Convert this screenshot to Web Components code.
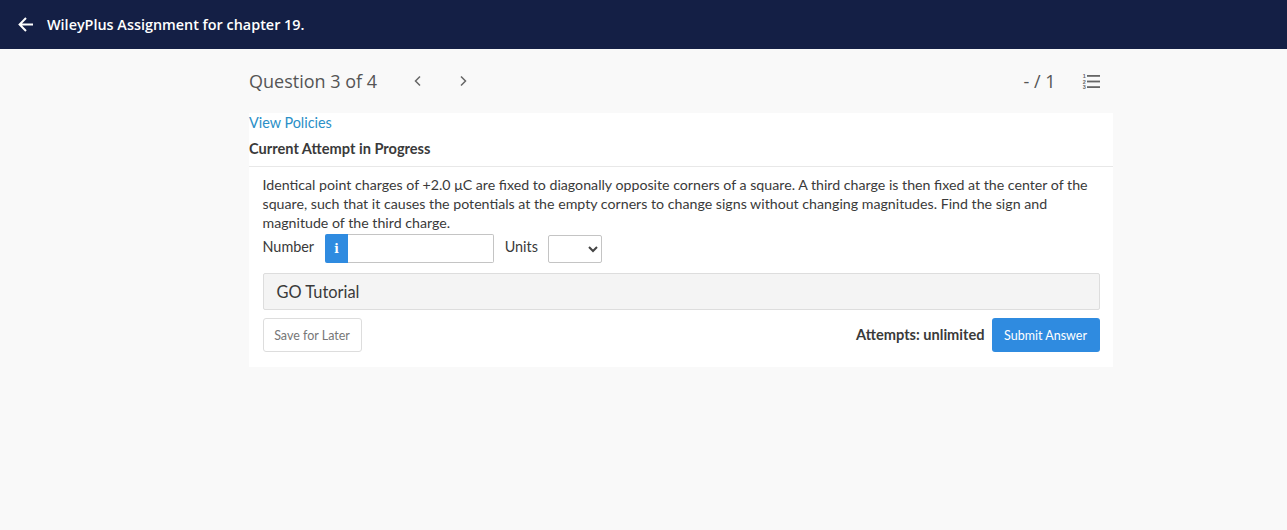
<!DOCTYPE html>
<html>
<head>
<meta charset="utf-8">
<title>WileyPlus Assignment</title>
<style>
  html, body { margin: 0; height: 100%; background: #f9f9f9; }
</style>
</head>
<body>

<app-header>WileyPlus Assignment for chapter 19.</app-header>

<question-page>
  <question-toolbar slot="toolbar" label="Question 3 of 4" score="- / 1"></question-toolbar>
  <question-card>
    Identical point charges of +2.0 μC are fixed to diagonally opposite corners of a square. A third charge is then fixed at the center of the square, such that it causes the potentials at the empty corners to change signs without changing magnitudes. Find the sign and magnitude of the third charge.
  </question-card>
</question-page>

<script>

class AppHeader extends HTMLElement {

  constructor () {

    super();

    this.attachShadow( { mode: 'open' } ).innerHTML = `
      <style>
        :host {
          display: flex;
          align-items: center;
          height: 49px;
          padding-left: 18px;
          background: #141f45;
          color: #fff;
          font: 600 14.4px "Open Sans", sans-serif;
        }
        svg { margin-right: 14px; flex: none; }
      </style>
      <svg width="15" height="15" viewBox="0 0 15 15" fill="none" stroke="#fff" stroke-width="2">
        <path d="M15 7.5H2M8 1 1.6 7.5 8 14"/>
      </svg>
      <slot></slot>
    `;

  }

}

class QuestionPage extends HTMLElement {

  constructor () {

    super();

    this.attachShadow( { mode: 'open' } ).innerHTML = `
      <style>
        :host {
          display: block;
          width: 864px;
          margin-left: 249px;
        }
      </style>
      <slot name="toolbar"></slot>
      <slot></slot>
    `;

  }

}

class QuestionToolbar extends HTMLElement {

  connectedCallback () {

    this.attachShadow( { mode: 'open' } ).innerHTML = `
      <style>
        :host {
          display: flex;
          align-items: center;
          height: 64px;
          padding-right: 13px;
          color: #555;
          font: 18px "Open Sans", sans-serif;
        }
        .label { width: 164px; }
        .nav { display: block; }
        .next { margin-left: 37px; }
        .score { margin-left: auto; margin-right: 26.5px; }
      </style>
      <span class="label">${ this.getAttribute( 'label' ) }</span>
      <svg class="nav" width="9" height="12" viewBox="0 0 9 12" fill="none" stroke="#666" stroke-width="1.5">
        <path d="M7 1.5 2.5 6 7 10.5"/>
      </svg>
      <svg class="nav next" width="9" height="12" viewBox="0 0 9 12" fill="none" stroke="#666" stroke-width="1.5">
        <path d="M2 1.5 6.5 6 2 10.5"/>
      </svg>
      <span class="score">${ this.getAttribute( 'score' ) }</span>
      <svg width="18" height="15" viewBox="0 0 18 15" fill="#666">
        <rect x="5" y="1" width="13" height="1.8"/>
        <rect x="5" y="6.6" width="13" height="1.8"/>
        <rect x="5" y="12.2" width="13" height="1.8"/>
        <g font-family="Liberation Sans, sans-serif" font-size="5.5" font-weight="700">
          <text x="0.8" y="4">1</text>
          <text x="0.8" y="9.5">2</text>
          <text x="0.8" y="15">3</text>
        </g>
      </svg>
    `;

  }

}

class QuestionCard extends HTMLElement {

  constructor () {

    super();

    this.attachShadow( { mode: 'open' } ).innerHTML = `
      <style>
        :host {
          display: block;
          height: 254px;
          background: #fff;
          color: #3a3a3a;
          font: 14.2px/19px Lato, sans-serif;
        }
        a { display: block; height: 26px; font-size: 14.4px; color: #2b8fc7; text-decoration: none; }
        .attempt { height: 27px; font-size: 14.6px; font-weight: 700; border-bottom: 1px solid #e8e8e8; }
        .body { padding: 8px 13.5px 0; }
        .text { margin-bottom: 2px; }
        .answer { display: flex; align-items: flex-start; height: 39px; font-size: 14.4px; }
        .answer > span:not(.info) { padding-top: 3px; }
        .info {
          display: flex;
          align-items: center;
          justify-content: center;
          width: 23px;
          height: 29px;
          margin-left: 11px;
          background: #2f8be0;
          border-radius: 2px 0 0 2px;
          color: #fff;
          font: 700 12px "DejaVu Serif", serif;
        }
        input {
          box-sizing: border-box;
          width: 146px;
          height: 29px;
          margin: 0 10.5px 0 0;
          border: 1px solid #c4c4c4;
          border-left: 0;
          border-radius: 0 2px 2px 0;
        }
        select {
          box-sizing: border-box;
          width: 54px;
          height: 28px;
          margin: 1px 0 0 10px;
          background: #fff;
          border: 1px solid #c4c4c4;
          border-radius: 2px;
          color: #444;
        }
        .tutorial {
          box-sizing: border-box;
          height: 37px;
          padding-left: 13px;
          background: #f4f4f4;
          border: 1px solid #ddd;
          border-radius: 2px;
          font-size: 16.4px;
          line-height: 35px;
        }
        .actions { display: flex; align-items: center; margin-top: 8px; }
        button {
          box-sizing: border-box;
          height: 34px;
          border-radius: 3px;
          font: 12.5px Lato, sans-serif;
        }
        .save { width: 99px; background: #fff; border: 1px solid #ddd; color: #777; }
        .tries { margin: 0 7px 0 auto; font-size: 14.6px; font-weight: 700; position: relative; top: -1px; }
        .submit { width: 108px; background: #2f8be0; border: 0; color: #fff; }
      </style>
      <a href="#">View Policies</a>
      <div class="attempt">Current Attempt in Progress</div>
      <div class="body">
        <div class="text"><slot></slot></div>
        <div class="answer">
          <span>Number</span>
          <span class="info">i</span>
          <input type="text">
          <span>Units</span>
          <select></select>
        </div>
        <div class="tutorial">GO Tutorial</div>
        <div class="actions">
          <button class="save">Save for Later</button>
          <span class="tries">Attempts: unlimited</span>
          <button class="submit">Submit Answer</button>
        </div>
      </div>
    `;

  }

}

customElements.define( 'app-header', AppHeader );
customElements.define( 'question-page', QuestionPage );
customElements.define( 'question-toolbar', QuestionToolbar );
customElements.define( 'question-card', QuestionCard );

</script>
</body>
</html>
